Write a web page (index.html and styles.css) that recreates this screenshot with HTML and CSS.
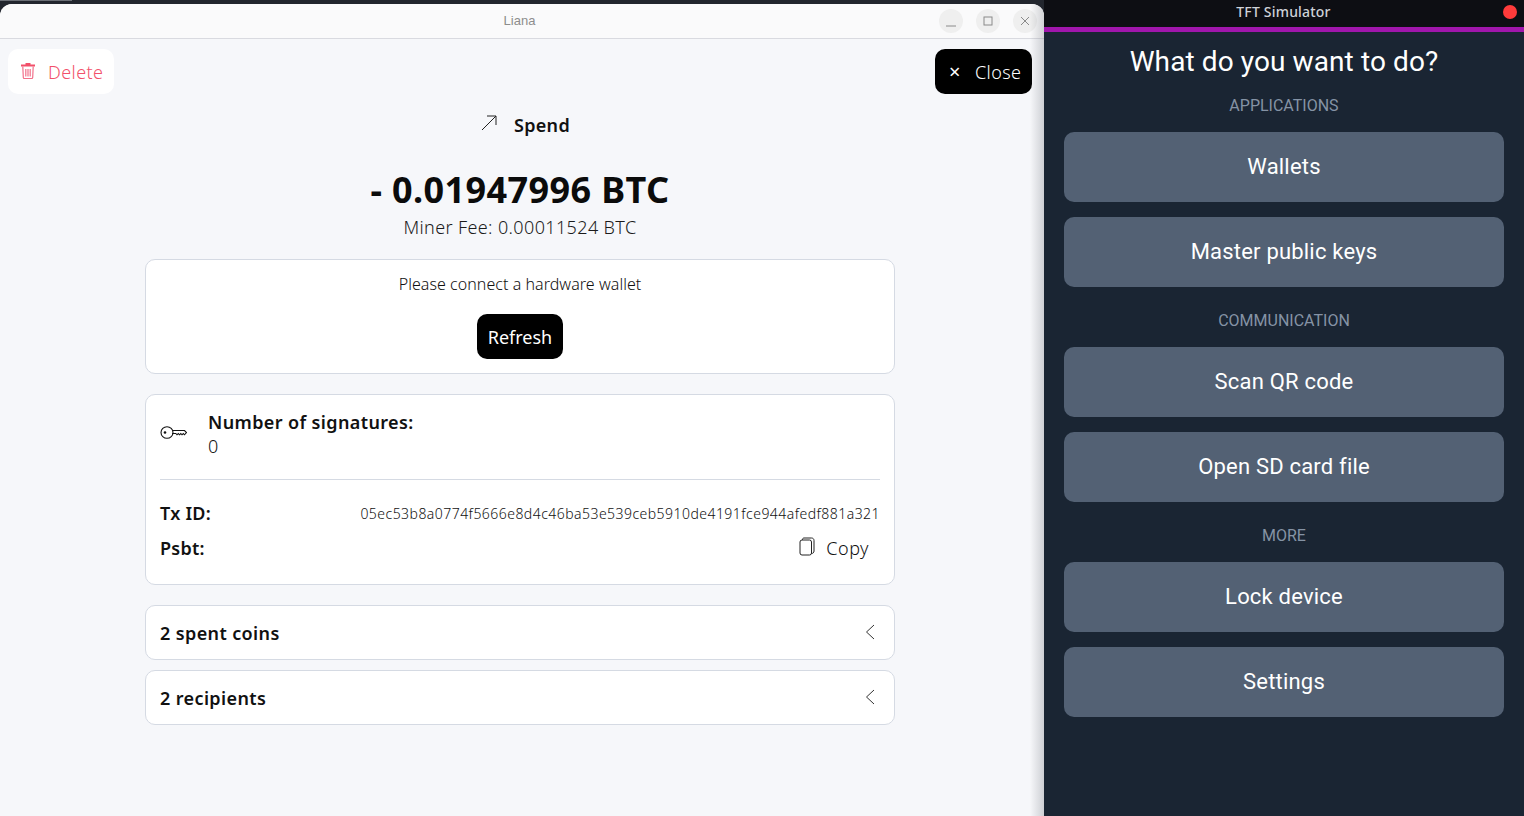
FILE: index.html
```html
<!DOCTYPE html>
<html lang="en">
<head>
    <meta charset="UTF-8">
    <title>Liana</title>
    <link rel="stylesheet" href="styles.css">
</head>
<body>

<div class="desk">
    <div class="desk-strip"><span class="desk-tab"></span></div>

    <div class="window">
        <div class="titlebar">
            <span class="titlebar-name">Liana</span>
            <div class="titlebar-buttons">
                <span class="win-btn"><svg viewBox="0 0 24 24"><path d="M7 17h10"/></svg></span>
                <span class="win-btn"><svg viewBox="0 0 24 24"><rect x="8" y="8" width="8" height="8"/></svg></span>
                <span class="win-btn"><svg viewBox="0 0 24 24"><path d="M8 8l8 8M16 8l-8 8"/></svg></span>
            </div>
        </div>

        <div class="content">
            <div class="top-actions">
                <button class="btn btn-delete">
                    <svg class="trash-icon" viewBox="0 0 16 18"><path class="trash-lid" d="M1 2.500h14v2H1zM5.500 1h5v1.500h-5z"/><path class="trash-body" d="M2.800 4.500l.5 11c0 .6.5 1 1 1h7.400c.5 0 1-.4 1-1l.5-11M5.800 7v7.500M8 7v7.500M10.200 7v7.500"/></svg>
                    Delete
                </button>
                <button class="btn btn-close"><span class="close-mark">×</span>Close</button>
            </div>

            <div class="summary">
                <div class="spend-row">
                    <svg class="spend-icon" viewBox="0 0 16 16"><path d="M1 15L15 1M6 1h9v9"/></svg>
                    <span>Spend</span>
                </div>
                <div class="amount">- 0.01947996 BTC</div>
                <div class="fee">Miner Fee: 0.00011524 BTC</div>
            </div>

            <div class="card card-hw">
                <p>Please connect a hardware wallet</p>
                <button class="btn btn-refresh">Refresh</button>
            </div>

            <div class="card card-info">
                <div class="sigs">
                    <svg class="key-icon" viewBox="0 0 27 15"><ellipse cx="7" cy="7.500" rx="6" ry="5.800"/><circle cx="5" cy="7.500" r="1.300" class="key-dot"/><path d="M12.700 5.500h11.800l2 2-2 2.300-1.200-1.300-1.300 1.300-1.200-1.300-1.300 1.300-1.200-1.300-1.300 1.300-1.200-1.300h-3.700"/></svg>
                    <div>
                        <div class="sigs-title">Number of signatures:</div>
                        <div class="sigs-count">0</div>
                    </div>
                </div>
                <div class="info-row">
                    <strong>Tx ID:</strong>
                    <span class="txid">05ec53b8a0774f5666e8d4c46ba53e539ceb5910de4191fce944afedf881a321</span>
                </div>
                <div class="info-row psbt-row">
                    <strong>Psbt:</strong>
                    <span class="copy">
                        <svg class="copy-icon" viewBox="0 0 16 19"><rect x="1" y="3" width="11.500" height="15" rx="2"/><path d="M3.500 3V2.500c0-1 .7-1.500 1.500-1.500h7.500c1.500 0 2.500 1 2.500 2.500V14c0 1.500-1 2.500-2.500 2.500"/></svg>
                        Copy
                    </span>
                </div>
            </div>

            <div class="card card-fold">
                <strong>2 spent coins</strong>
                <svg class="chevron" viewBox="0 0 10 16"><path d="M9 1L1.500 8 9 15"/></svg>
            </div>
            <div class="card card-fold">
                <strong>2 recipients</strong>
                <svg class="chevron" viewBox="0 0 10 16"><path d="M9 1L1.500 8 9 15"/></svg>
            </div>
        </div>
    </div>
</div>

<div class="sim">
    <div class="sim-bar">
        <span class="sim-title">TFT Simulator</span>
        <span class="sim-dot"></span>
    </div>
    <div class="sim-body">
        <h1>What do you want to do?</h1>

        <div class="sim-label">APPLICATIONS</div>
        <button class="sim-btn">Wallets</button>
        <button class="sim-btn">Master public keys</button>

        <div class="sim-label">COMMUNICATION</div>
        <button class="sim-btn">Scan QR code</button>
        <button class="sim-btn">Open SD card file</button>

        <div class="sim-label">MORE</div>
        <button class="sim-btn">Lock device</button>
        <button class="sim-btn">Settings</button>
    </div>
</div>

</body>
</html>
```

FILE: styles.css
```css
* {
    box-sizing: border-box;
}

html, body {
    height: 100%;
}

body {
    margin: 0;
    display: flex;
    height: 816px;
    overflow: hidden;
    font-family: "Noto Sans", "Open Sans", sans-serif;
    background-color: #1a2533;
}

button {
    font-family: inherit;
    border: none;
    cursor: pointer;
}

.desk {
    width: 1044px;
    flex: none;
    background-color: #22262e;
    display: flex;
    flex-direction: column;
}

.desk-strip {
    height: 4px;
    flex: none;
}

.desk-tab {
    display: block;
    width: 72px;
    height: 1px;
    background-color: #6b6f76;
}

.window {
    flex: 1;
    display: flex;
    flex-direction: column;
    background-color: #f6f7fa;
    border-radius: 12px 12px 0 0;
    overflow: hidden;
    position: relative;
}

.window::after {
    content: "";
    position: absolute;
    top: 0;
    right: 0;
    bottom: 0;
    width: 14px;
    background: linear-gradient(to right, rgba(120, 124, 132, 0), rgba(120, 124, 132, 0.32));
}

.titlebar {
    height: 35px;
    flex: none;
    background-color: #fafafb;
    border-bottom: 1px solid #d9dae0;
    display: flex;
    align-items: center;
    justify-content: center;
    position: relative;
}

.titlebar-name {
    font-family: "Liberation Sans", sans-serif;
    font-size: 13px;
    color: #8d8d8d;
    margin: -2px 5px 0 0;
}

.titlebar-buttons {
    position: absolute;
    top: 5px;
    right: 7px;
    display: flex;
    gap: 13px;
}

.win-btn {
    width: 24px;
    height: 24px;
    border-radius: 50%;
    background-color: #efefef;
}

.win-btn svg {
    display: block;
    width: 24px;
    height: 24px;
    fill: none;
    stroke: #8a8a8a;
    stroke-width: 1;
}

.content {
    flex: 1;
    padding: 10px 12px 0 8px;
    display: flex;
    flex-direction: column;
    align-items: center;
}

.top-actions {
    align-self: stretch;
    display: flex;
    justify-content: space-between;
}

.btn {
    height: 45px;
    border-radius: 10px;
    font-size: 18px;
    letter-spacing: 0.4px;
    display: flex;
    align-items: center;
}

.btn-delete {
    width: 106px;
    padding: 0 0 0 12px;
    gap: 12px;
    background-color: #fff;
    color: #f2506a;
    font-weight: 300;
}

.trash-icon {
    width: 16px;
    height: 18px;
    margin-top: -2px;
}

.trash-lid {
    fill: #f2506a;
}

.trash-body {
    fill: none;
    stroke: #f2708a;
    stroke-width: 1.200;
}

.btn-close {
    width: 97px;
    padding: 0 0 0 14px;
    background-color: #000;
    color: #fff;
    font-weight: 300;
}

.close-mark {
    width: 26px;
    font-size: 20px;
    font-weight: 400;
    text-align: left;
}

.summary {
    display: flex;
    flex-direction: column;
    align-items: center;
    margin-top: 17px;
    height: 148px;
}

.spend-row {
    display: flex;
    align-items: center;
    gap: 17px;
    height: 28px;
    margin-left: 11px;
    font-size: 18px;
    letter-spacing: 0.3px;
    font-weight: 600;
    color: #111;
}

.spend-icon {
    width: 16px;
    height: 16px;
    margin-top: -4px;
    fill: none;
    stroke: #222;
    stroke-width: 1;
}

.amount {
    margin-top: 26px;
    font-size: 36px;
    line-height: 50px;
    letter-spacing: 0.4px;
    font-weight: 700;
    color: #0b0b0b;
}

.fee {
    font-size: 18px;
    line-height: 25px;
    letter-spacing: 0.37px;
    font-weight: 300;
    color: #1b1b1b;
}

.card {
    width: 750px;
    background-color: #fff;
    border: 1px solid #d5dae3;
    border-radius: 10px;
    color: #111;
}

.card-hw {
    height: 115px;
    margin-top: 0;
    padding-top: 12px;
    display: flex;
    flex-direction: column;
    align-items: center;
}

.card-hw p {
    margin: 0;
    font-size: 16px;
    line-height: 24px;
    letter-spacing: 0.05px;
    font-weight: 300;
}

.btn-refresh {
    margin-top: 18px;
    width: 86px;
    justify-content: center;
    background-color: #000;
    color: #fff;
    font-weight: 400;
    letter-spacing: 0;
}

.card-info {
    height: 191px;
    margin-top: 20px;
    padding: 14px 14px 0;
}

.sigs {
    height: 71px;
    display: flex;
    gap: 21px;
    border-bottom: 1px solid #d5dae3;
    font-size: 18px;
}

.key-icon {
    width: 27px;
    height: 15px;
    margin-top: 16px;
    fill: none;
    stroke: #111;
    stroke-width: 1.100;
}

.key-dot {
    fill: #111;
    stroke: none;
}

.sigs-title {
    font-weight: 600;
    line-height: 26px;
    letter-spacing: 0.38px;
}

.sigs-count {
    font-weight: 300;
    line-height: 23px;
}

.info-row {
    display: flex;
    justify-content: space-between;
    align-items: center;
    height: 35px;
    font-size: 18px;
}

.sigs + .info-row {
    margin-top: 15px;
}

.info-row strong {
    font-weight: 600;
    letter-spacing: 0.25px;
}

.txid {
    margin-top: 1px;
    font-size: 14px;
    font-weight: 300;
    letter-spacing: 0.46px;
}

.copy {
    display: flex;
    align-items: center;
    gap: 11px;
    padding-right: 11px;
    font-weight: 300;
    letter-spacing: 0.5px;
}

.copy-icon {
    width: 16px;
    height: 19px;
    margin-top: -3px;
    fill: none;
    stroke: #222;
    stroke-width: 1;
}

.card-fold {
    height: 55px;
    margin-top: 10px;
    padding: 0 19px 0 14px;
    display: flex;
    align-items: center;
    justify-content: space-between;
    font-size: 18px;
}

.card-info + .card-fold {
    margin-top: 20px;
}

.card-fold strong {
    font-weight: 600;
    letter-spacing: 0.38px;
}

.chevron {
    width: 10px;
    height: 16px;
    margin-top: -2px;
    fill: none;
    stroke: #333;
    stroke-width: 1;
}

.sim {
    flex: 1;
    display: flex;
    flex-direction: column;
    font-family: Roboto, sans-serif;
}

.sim-bar {
    height: 32px;
    flex: none;
    background-color: #0d0e13;
    border-bottom: 5px solid #a016ac;
    display: flex;
    align-items: center;
    justify-content: center;
    position: relative;
    font-family: "Noto Sans", sans-serif;
    font-size: 14px;
    font-weight: 500;
    color: #cfd2d8;
}

.sim-title {
    margin: -4px 0 0 -1px;
    letter-spacing: 0.2px;
}

.sim-dot {
    position: absolute;
    top: 5px;
    right: 7px;
    width: 14px;
    height: 14px;
    border-radius: 50%;
    background-color: #ff3b3b;
}

.sim-body {
    flex: 1;
    padding: 0 20px;
    display: flex;
    flex-direction: column;
    color: #fff;
}

.sim-body h1 {
    margin: 10px 0 0;
    font-size: 28px;
    line-height: 40px;
    letter-spacing: 0.1px;
    font-weight: 400;
    text-align: center;
}

.sim-label {
    height: 15px;
    margin: 26px 0 19px;
    font-size: 16px;
    line-height: 15px;
    font-weight: 400;
    text-align: center;
    color: #8593a5;
}

.sim-body h1 + .sim-label {
    margin: 16px 0 19px;
}

.sim-btn {
    height: 70px;
    flex: none;
    padding: 0 0 2px;
    border-radius: 10px;
    background-color: #536174;
    color: #fff;
    font-size: 22px;
    letter-spacing: 0.2px;
}

.sim-btn + .sim-btn {
    margin-top: 15px;
}
```
